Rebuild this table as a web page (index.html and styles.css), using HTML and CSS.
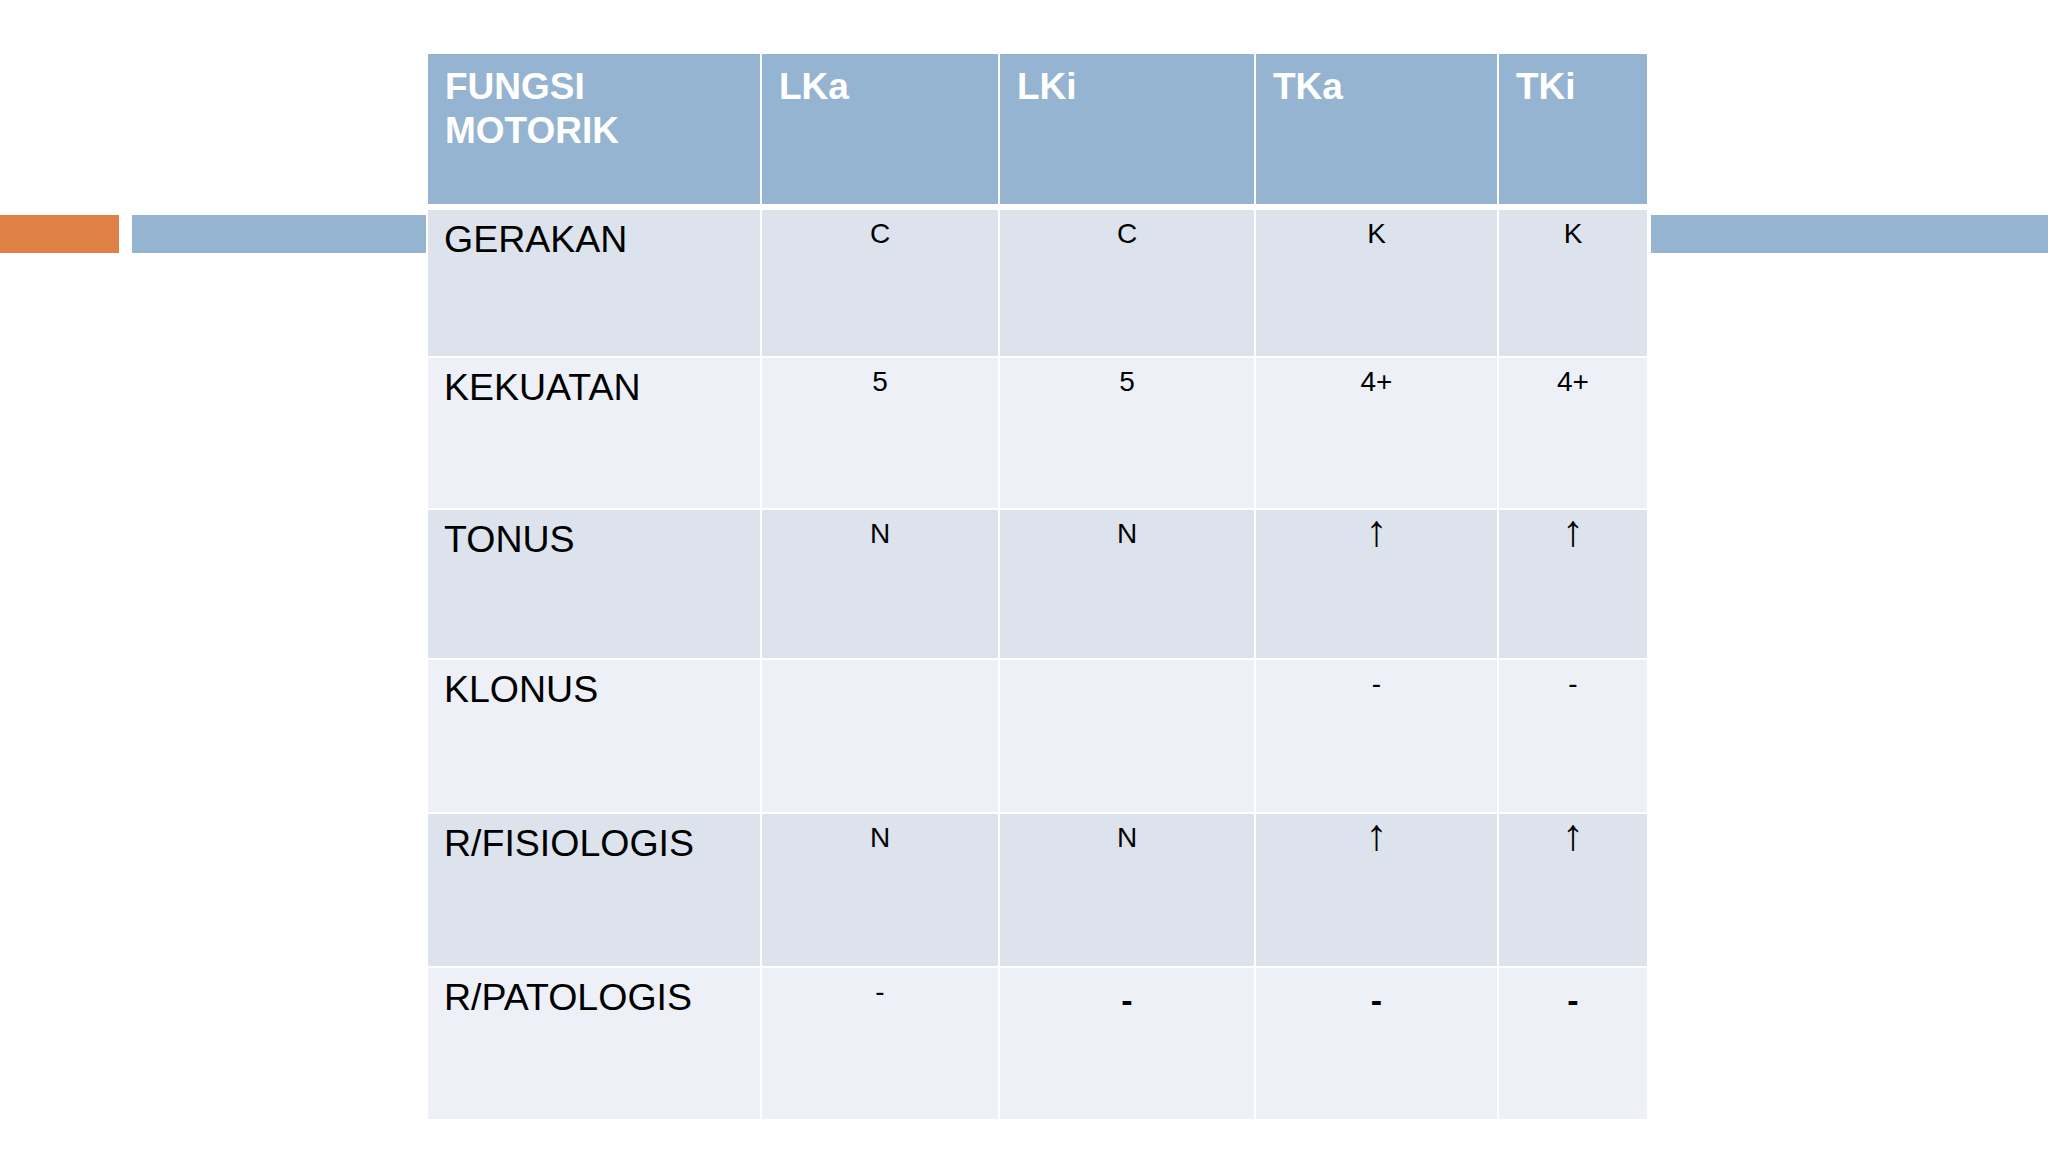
FILE: index.html
```html
<!DOCTYPE html>
<html>
<head>
<meta charset="utf-8">
<link rel="stylesheet" href="styles.css">
</head>
<body>
<div class="slide">
  <div class="bars-left">
    <div class="bar bar-orange"></div>
    <div class="bar bar-blue bar-left-blue"></div>
  </div>
  <div class="table">
    <div class="hcell">FUNGSI<br>MOTORIK</div>
    <div class="hcell">LKa</div>
    <div class="hcell">LKi</div>
    <div class="hcell">TKa</div>
    <div class="hcell">TKi</div>

    <div class="label dark">GERAKAN</div>
    <div class="val dark">C</div>
    <div class="val dark">C</div>
    <div class="val dark">K</div>
    <div class="val dark">K</div>

    <div class="label light">KEKUATAN</div>
    <div class="val light">5</div>
    <div class="val light">5</div>
    <div class="val light">4+</div>
    <div class="val light">4+</div>

    <div class="label dark">TONUS</div>
    <div class="val dark">N</div>
    <div class="val dark">N</div>
    <div class="val dark arrow">↑</div>
    <div class="val dark arrow">↑</div>

    <div class="label light">KLONUS</div>
    <div class="val light"></div>
    <div class="val light"></div>
    <div class="val light">-</div>
    <div class="val light">-</div>

    <div class="label dark">R/FISIOLOGIS</div>
    <div class="val dark">N</div>
    <div class="val dark">N</div>
    <div class="val dark arrow">↑</div>
    <div class="val dark arrow">↑</div>

    <div class="label light">R/PATOLOGIS</div>
    <div class="val light">-</div>
    <div class="val light dash-low">-</div>
    <div class="val light dash-low">-</div>
    <div class="val light dash-low">-</div>
  </div>
  <div class="bar bar-blue bar-right"></div>
</div>
</body>
</html>
```

FILE: styles.css
```css
html, body {
  margin: 0;
  padding: 0;
  background: #ffffff;
}

body {
  width: 2048px;
  height: 1152px;
  overflow: hidden;
  font-family: "Liberation Sans", Arial, sans-serif;
}

.slide {
  display: flex;
  align-items: flex-start;
  padding-top: 54px;
}

.bars-left {
  display: flex;
  width: 428px;
  margin-top: 161px;
  flex-shrink: 0;
}

.bar {
  height: 38px;
}

.bar-orange {
  width: 119px;
  background: #df8045;
}

.bar-blue {
  background: #94b4d0;
}

.bar-left-blue {
  width: 294px;
  margin-left: 13px;
}

.bar-right {
  flex: 1;
  margin-left: 4px;
  margin-top: 161px;
}

.table {
  display: grid;
  grid-template-columns: 332px 236px 254px 241px 148px;
  grid-template-rows: 154px 146px 150px 148px 152px 152px 151px;
  column-gap: 2px;
  row-gap: 2px;
  width: 1219px;
  flex-shrink: 0;
}

.hcell {
  background: #95b4d1;
  color: #ffffff;
  font-weight: bold;
  font-size: 37px;
  line-height: 44px;
  padding: 11px 0 0 17px;
  margin-bottom: 4px;
}

.label {
  color: #000000;
  font-size: 37.5px;
  line-height: 44px;
  padding: 7px 0 0 16px;
}

.val {
  color: #000000;
  font-size: 28px;
  line-height: 32px;
  padding-top: 8px;
  text-align: center;
}

.arrow {
  font-size: 44px;
  padding-top: 5px;
}

.dash-low {
  font-size: 34px;
  font-weight: bold;
  padding-top: 16px;
}

.dark {
  background: #dce3ec;
}

.light {
  background: #edf0f7;
}
```
